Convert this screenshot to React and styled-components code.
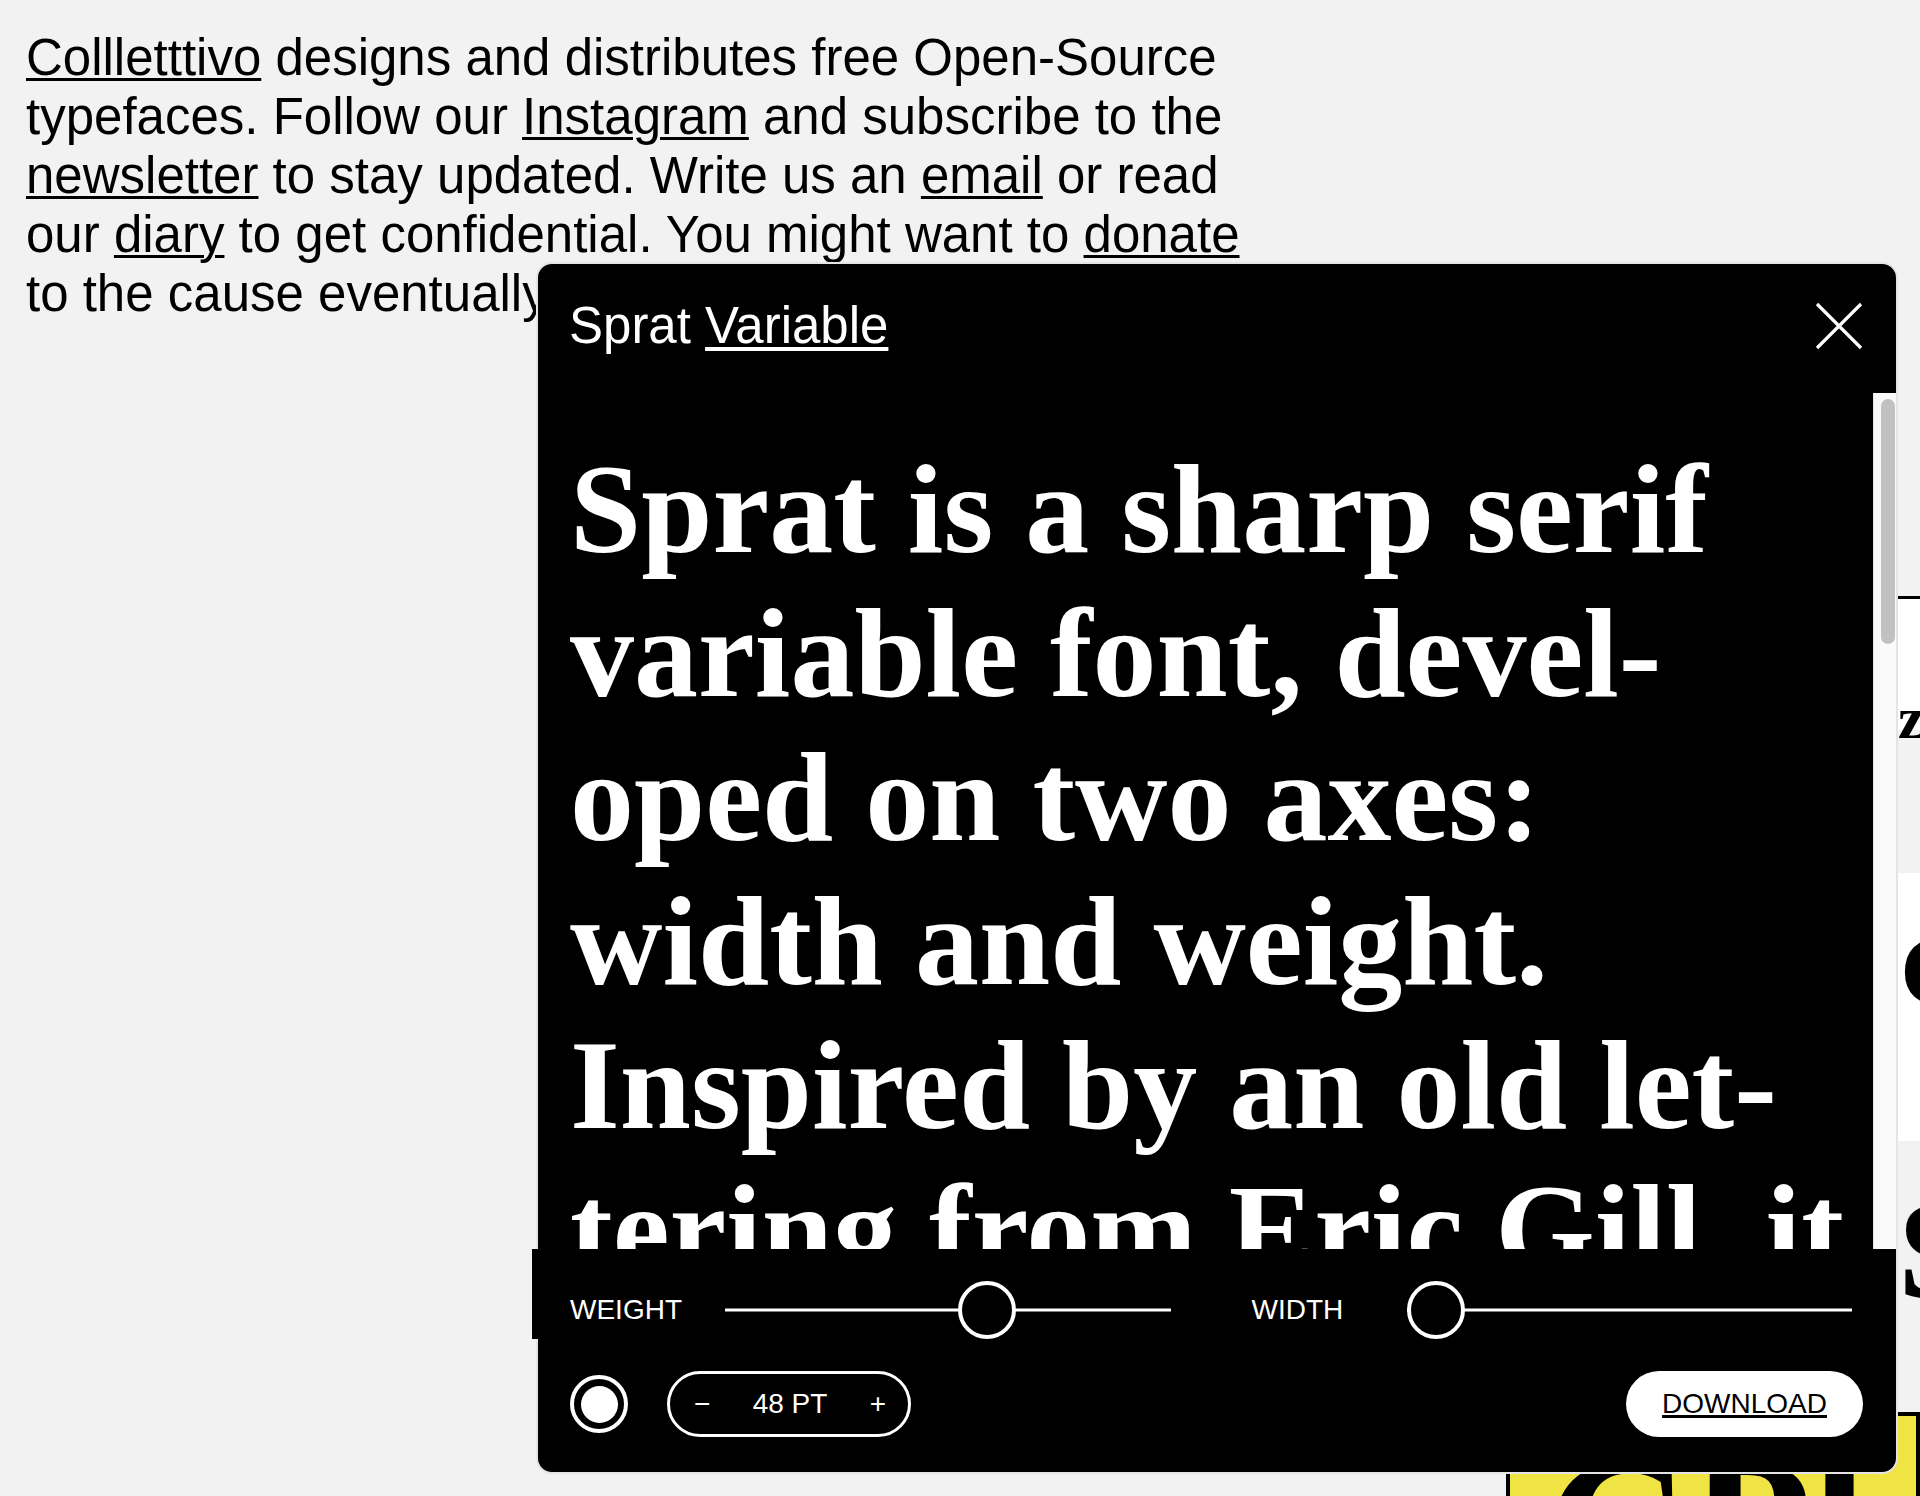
import React from 'react'
import styled, { createGlobalStyle } from 'styled-components'

const specimenLines = [
  'Sprat is a sharp serif',
  'variable font, devel-',
  'oped on two axes:',
  'width and weight.',
  'Inspired by an old let-',
  'tering from Eric Gill, it',
  'has been drawn with',
  'a strong contrast and',
  'tight spacing. It works',
  'at its best in big sizes,',
  'for titles, headlines',
  'and posters, where its',
  'sharp details can be',
  'fully appreciated. The',
  'narrow widths make it',
  'perfect for editorial',
  'layouts, while the wide',
  'ones give it a bold and',
  'confident presence on',
  'the page.',
]

const Slider = ({ label, value }) => (
  <SliderGroup>
    <SliderLabel>{label}</SliderLabel>
    <Track>
      <Thumb style={{ left: `calc(${value * 100}% - ${value * 58}px)` }} />
    </Track>
  </SliderGroup>
)

const App = () => {
  return (
    <>
      <GlobalStyle />
      <Page>
        <Intro>
          <Link href="#">Collletttivo</Link> designs and distributes free Open-Source typefaces. Follow our{' '}
          <Link href="#">Instagram</Link> and subscribe to the <Link href="#">newsletter</Link> to stay updated.
          Write us an <Link href="#">email</Link> or read our <Link href="#">diary</Link> to get confidential. You
          might want to <Link href="#">donate</Link> to the cause eventually.
        </Intro>

        <SpecimenColumn>
          <Specimen $height={134} $bg="#fff" $borderTop>
            <Glyph $size={60} $x={392} $y={89}>z</Glyph>
          </Specimen>
          <Specimen $height={143} />
          <Specimen $height={268} $bg="#fff">
            <Glyph $size={100} $x={394} $y={48}>C</Glyph>
          </Specimen>
          <Specimen $height={271}>
            <Glyph $size={140} $x={392} $y={40}>S</Glyph>
          </Specimen>
          <Specimen $height={200} $bg="#efe444" $framed>
            <Glyph $size={200} $x={35} $y={12}>CPlated</Glyph>
          </Specimen>
        </SpecimenColumn>

        <Modal>
          <ModalHeader>
            <Title>
              Sprat <TitleLink href="#">Variable</TitleLink>
            </Title>
            <CloseButton aria-label="Close">
              <svg width="48" height="48" viewBox="0 0 48 48" fill="none">
                <path d="M2 2L46 46M46 2L2 46" stroke="#fff" strokeWidth="3.2" />
              </svg>
            </CloseButton>
          </ModalHeader>

          <ScrollBody>
            <Viewport>
              <SpecimenText>
                {specimenLines.map((line) => (
                  <TextLine key={line}>{line}</TextLine>
                ))}
              </SpecimenText>
            </Viewport>
            <ScrollTrack>
              <ScrollThumb />
            </ScrollTrack>
          </ScrollBody>

          <SliderRow>
            <Slider label="Weight" value={0.6} />
            <Slider label="Width" value={0} />
          </SliderRow>

          <BottomRow>
            <Toggle>
              <ToggleDot />
            </Toggle>
            <SizePill>
              <PillButton>−</PillButton>
              <span>48 PT</span>
              <PillButton>+</PillButton>
            </SizePill>
            <DownloadButton>DOWNLOAD</DownloadButton>
          </BottomRow>
        </Modal>
      </Page>
    </>
  )
}

export default App

const GlobalStyle = createGlobalStyle`
html, body {
    margin:0;
    padding:0;
    background:#f2f2f2;
}
body{
    font-family: "Liberation Sans", Arial, Helvetica, sans-serif;
    overflow:hidden;
}
`

const Page = styled.div`
position:relative;
width:1920px;
height:1496px;
box-sizing:border-box;
padding-left:26px;
display:grid;
grid-template-columns: 1254px 414px;
column-gap:226px;
overflow:hidden;
`

const Intro = styled.p`
margin:0;
padding-top:28px;
font-size:51px;
line-height:59px;
color:#000;
`

const Link = styled.a`
color:inherit;
text-decoration:underline;
text-decoration-thickness:3px;
text-underline-offset:3px;
`

const SpecimenColumn = styled.div`
display:flex;
flex-direction:column;
padding-top:596px;
`

const Specimen = styled.div`
height:${(p) => p.$height}px;
flex:none;
box-sizing:border-box;
background:${(p) => p.$bg || 'transparent'};
border-top:${(p) => (p.$borderTop ? '3px solid #000' : 'none')};
${(p) => p.$framed && 'border:4px solid #000; border-bottom:none;'}
`

const Glyph = styled.span`
display:block;
margin:${(p) => p.$y}px 0 0 ${(p) => p.$x}px;
font-family: "Liberation Serif", "DejaVu Serif", serif;
font-weight:700;
font-size:${(p) => p.$size}px;
line-height:1;
color:#000;
white-space:nowrap;
`

const Modal = styled.div`
position:absolute;
left:536px;
top:262px;
width:1362px;
height:1212px;
box-sizing:border-box;
background:#000;
color:#fff;
border:2px solid #e4e4e4;
border-radius:16px;
display:flex;
flex-direction:column;
`

const ModalHeader = styled.div`
height:129px;
flex:none;
box-sizing:border-box;
padding:32px 33px 0 31px;
display:flex;
justify-content:space-between;
align-items:flex-start;
`

const Title = styled.h2`
margin:0;
font-size:51px;
line-height:59px;
font-weight:400;
`

const TitleLink = styled.a`
color:#fff;
text-decoration:underline;
text-decoration-thickness:3.5px;
text-underline-offset:4px;
`

const CloseButton = styled.button`
margin-top:6px;
padding:0;
border:none;
background:transparent;
cursor:pointer;
display:flex;

svg{
    display:block;
}
`

const ScrollBody = styled.div`
flex:1;
min-height:0;
display:flex;
`

const Viewport = styled.div`
flex:1;
min-width:0;
overflow:hidden;
background:#000;
`

const SpecimenText = styled.div`
padding:44px 0 60px 32px;
font-family: "Liberation Serif", "DejaVu Serif", serif;
font-weight:700;
font-size:128px;
line-height:144px;
color:#fff;
white-space:nowrap;
`

const TextLine = styled.span`
display:block;
`

const ScrollTrack = styled.div`
width:23px;
flex:none;
box-sizing:border-box;
padding:6px 1px 0 7px;
background:#fafafa;
border-left:1px solid #e6e6e6;
`

const ScrollThumb = styled.div`
height:245px;
border-radius:8px;
background:#c1c1c1;
`

const SliderRow = styled.div`
position:relative;
z-index:1;
height:90px;
flex:none;
box-sizing:border-box;
margin:0 1px 0 -6px;
padding:32px 43px 0 38px;
background:#000;
display:flex;
gap:81px;
`

const SliderGroup = styled.div`
flex:1;
display:flex;
align-items:center;
height:58px;
`

const SliderLabel = styled.span`
width:155px;
flex:none;
font-size:28px;
text-transform:uppercase;
`

const Track = styled.div`
position:relative;
flex:1;
height:58px;

&::before{
    content:'';
    position:absolute;
    left:0;
    right:0;
    top:50%;
    height:3px;
    transform:translateY(-50%);
    background:#fff;
}
`

const Thumb = styled.div`
position:absolute;
top:0;
width:58px;
height:58px;
box-sizing:border-box;
border:4px solid #fff;
border-radius:50%;
background:#000;
`

const BottomRow = styled.div`
height:133px;
flex:none;
box-sizing:border-box;
padding:32px 33px 35px 32px;
display:flex;
align-items:center;
`

const Toggle = styled.div`
width:58px;
height:58px;
box-sizing:border-box;
border:4px solid #fff;
border-radius:50%;
display:flex;
align-items:center;
justify-content:center;
margin-right:39px;
cursor:pointer;
`

const ToggleDot = styled.div`
width:37px;
height:37px;
border-radius:50%;
background:#fff;
`

const SizePill = styled.div`
width:244px;
height:66px;
box-sizing:border-box;
border:3px solid #fff;
border-radius:33px;
padding:0 22px 0 24px;
display:flex;
align-items:center;
justify-content:space-between;
font-size:28px;
`

const PillButton = styled.span`
cursor:pointer;
`

const DownloadButton = styled.button`
margin-left:auto;
height:66px;
padding:0 36px;
border:none;
border-radius:33px;
background:#fff;
color:#000;
font-family:inherit;
font-size:28px;
text-decoration:underline;
text-decoration-thickness:3px;
text-underline-offset:2px;
cursor:pointer;
`
